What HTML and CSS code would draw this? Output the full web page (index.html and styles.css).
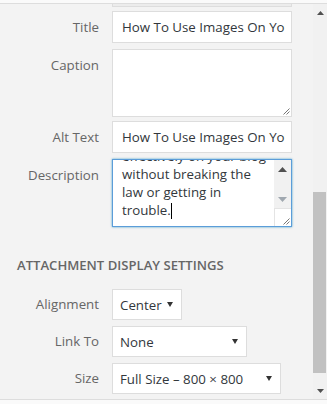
FILE: index.html
```html
<!DOCTYPE html>
<html>
<head>
<meta charset="utf-8">
<link rel="stylesheet" href="styles.css">
</head>
<body>
<div class="frame">
  <div class="edge-top"></div>
  <div class="main">
    <div class="pane">
      <div class="clip-field"></div>

      <div class="row gap-title">
        <div class="lbl">Title</div>
        <div class="field input"><span class="val">How To Use Images On Your Blog</span></div>
      </div>

      <div class="row gap-6">
        <div class="lbl">Caption</div>
        <div class="field textarea caption">
          <svg class="grip" width="8" height="8" viewBox="0 0 8 8"><path d="M7.5 1.5 L1.5 7.5 M7.5 4.5 L4.5 7.5" stroke="#777" stroke-width="1" fill="none"/></svg>
        </div>
      </div>

      <div class="row gap-4">
        <div class="lbl">Alt Text</div>
        <div class="field input"><span class="val">How To Use Images On Your Blog</span></div>
      </div>

      <div class="row gap-6">
        <div class="lbl">Description</div>
        <div class="field textarea desc">
          <div class="ta-text">effectively on your blog<br>without breaking the<br>law or getting in<br>trouble.<span class="caret"></span></div>
          <div class="ta-scroll">
            <div class="ta-btn"><svg width="9" height="5" viewBox="0 0 9 5"><path d="M0 5 L4.5 0 L9 5Z" fill="#505050"/></svg></div>
            <div class="ta-space"></div>
            <div class="ta-btn"><svg width="9" height="5" viewBox="0 0 9 5"><path d="M0 0 L4.5 5 L9 0Z" fill="#a0a8b0"/></svg></div>
            <div class="ta-resizer"><svg width="8" height="8" viewBox="0 0 8 8"><path d="M7.5 1.5 L1.5 7.5 M7.5 4.5 L4.5 7.5" stroke="#777" stroke-width="1" fill="none"/></svg></div>
          </div>
        </div>
      </div>

      <h2 class="heading">Attachment Display Settings</h2>

      <div class="row gap-15">
        <div class="lbl sel-lbl">Alignment</div>
        <div class="select w-align"><span>Center</span><svg class="arr" width="6" height="5" viewBox="0 0 6 5"><path d="M0 0 L3 5 L6 0Z" fill="#333"/></svg></div>
      </div>

      <div class="row gap-6">
        <div class="lbl sel-lbl">Link To</div>
        <div class="select w-link"><span>None</span><svg class="arr" width="6" height="5" viewBox="0 0 6 5"><path d="M0 0 L3 5 L6 0Z" fill="#333"/></svg></div>
      </div>

      <div class="row gap-6">
        <div class="lbl sel-lbl">Size</div>
        <div class="select w-size"><span>Full Size – 800 × 800</span><svg class="arr" width="6" height="5" viewBox="0 0 6 5"><path d="M0 0 L3 5 L6 0Z" fill="#333"/></svg></div>
      </div>
    </div>

    <div class="vscroll">
      <div class="sb-btn up"><svg width="7" height="4" viewBox="0 0 7 4"><path d="M0 4 L3.5 0 L7 4Z" fill="#505050"/></svg></div>
      <div class="sb-track"><div class="sb-thumb"></div></div>
      <div class="sb-btn down"><svg width="7" height="4" viewBox="0 0 7 4"><path d="M0 0 L3.5 4 L7 0Z" fill="#505050"/></svg></div>
    </div>
  </div>
  <div class="edge-bottom"></div>
</div>
</body>
</html>
```

FILE: styles.css
```css
* { box-sizing: border-box; margin: 0; padding: 0; }
html, body { width: 327px; height: 404px; overflow: hidden; }
body {
  font-family: "Open Sans", "Noto Sans", sans-serif;
  font-size: 13.3px;
  color: #32373c;
  background: #f3f3f3;
}
.frame { display: flex; flex-direction: column; height: 404px; }
.edge-top { height: 4px; background: #fafafa; border-bottom: 1px solid #dddddd; flex: none; }
.edge-bottom { height: 5px; background: #fafafa; border-top: 1px solid #dddddd; flex: none; }
.main { flex: 1; display: flex; min-height: 0; }
.pane { flex: 1; overflow: hidden; display: flex; flex-direction: column; }

.clip-field {
  margin-left: 112px;
  width: 180px;
  height: 3px;
  flex: none;
  background: #ececec;
  border: 1px solid #dddddd;
  border-top: none;
}

.row { display: flex; gap: 13px; flex: none; }
.gap-title { margin-top: 4px; }
.gap-4 { margin-top: 4px; }
.gap-6 { margin-top: 6px; }
.gap-15 { margin-top: 15px; }

.lbl {
  width: 99px;
  text-align: right;
  color: #666;
  line-height: 18px;
  padding-top: 7px;
  white-space: nowrap;
}
.sel-lbl { padding-top: 6px; }

.field {
  width: 180px;
  background: #fff;
  border: 1px solid #dddddd;
  overflow: hidden;
}
.input {
  height: 32px;
  display: flex;
  align-items: center;
  padding: 0 6px 0 9px;
  white-space: nowrap;
  line-height: 18px;
}
.val { flex: 1; min-width: 0; overflow: hidden; }
.textarea { height: 68px; }
.caption {
  display: flex;
  align-items: flex-end;
  justify-content: flex-end;
  padding: 0 1px 1px 0;
}
.desc {
  display: flex;
  border-color: #5b9dd9;
  box-shadow: 0 0 2px rgba(30, 140, 190, 0.8);
}
.ta-text {
  flex: 1;
  padding: 0 9px;
  line-height: 18px;
  margin-top: -13px;
  white-space: nowrap;
  overflow: hidden;
}
.caret {
  display: inline-block;
  width: 1px;
  height: 16px;
  background: #000;
  vertical-align: -4px;
}
.ta-scroll {
  width: 17px;
  flex: none;
  background: #f1f1f1;
  display: flex;
  flex-direction: column;
}
.ta-btn { height: 18px; display: flex; align-items: center; justify-content: center; flex: none; }
.ta-space { flex: 1; }
.ta-resizer {
  height: 18px;
  flex: none;
  background: #fff;
  border-top: 1px solid #e4e4e4;
  border-left: 1px solid #e4e4e4;
  display: flex;
  align-items: flex-end;
  justify-content: flex-end;
  padding: 0 1px 1px 0;
}

.heading {
  margin: 29px 0 0 17px;
  font-size: 13.1px;
  font-weight: 600;
  line-height: 18px;
  text-transform: uppercase;
  color: #666;
  flex: none;
}

.select {
  height: 31px;
  background: #fff;
  border: 1px solid #dddddd;
  display: flex;
  align-items: center;
  justify-content: space-between;
  padding: 0 8px 0 7px;
  white-space: nowrap;
  line-height: 18px;
}
.w-align { width: 70px; }
.w-link { width: 135px; }
.w-size { width: 169px; }
.arr { flex: none; }

.vscroll {
  width: 14px;
  flex: none;
  background: #f1f1f1;
  display: flex;
  flex-direction: column;
}
.sb-btn { height: 18px; flex: none; display: flex; justify-content: center; }
.sb-btn.up { align-items: center; }
.sb-btn.down { align-items: flex-end; padding-bottom: 6px; }
.sb-track { flex: 1; }
.sb-thumb {
  margin-top: 170px;
  width: 13px;
  height: 181px;
  background: #c1c1c1;
}
```
